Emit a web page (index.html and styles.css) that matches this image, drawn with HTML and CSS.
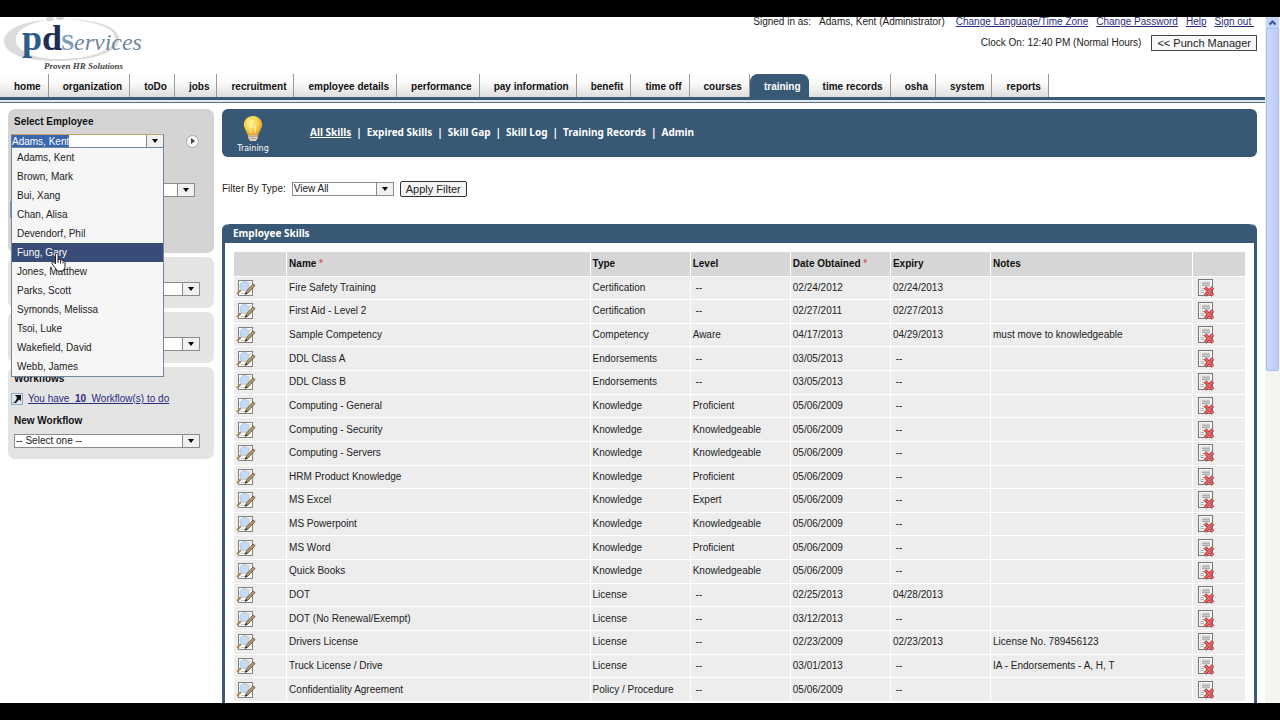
FILE: index.html
```html
<!DOCTYPE html>
<html lang="en">
<head>
    <meta charset="UTF-8">
    <meta name="viewport" content="width=device-width, initial-scale=1.0">
    <title>pdServices - Training</title>
    <link rel="stylesheet" href="styles.css">
</head>
<body>
    <svg class="defs" aria-hidden="true">
        <symbol id="edit" viewBox="0 0 20 18">
            <rect x="2.5" y="1.5" width="14" height="15" fill="#fbfbfa" stroke="#85837c"/>
            <path d="M5 14.500h6M12 4h3" stroke="#c9c9c5"/>
            <path d="M5 11l-4 4" stroke="#a5895f" stroke-width="2"/>
            <circle cx="8.500" cy="7" r="4.500" fill="#c5daf5" stroke="#b4c6de"/>
            <path d="M9 15.500l1.500-3.500L17 5l2 1.500-7 7.500z" fill="#b99b6b" stroke="#5c4830" stroke-width=".8"/>
            <path d="M9 15.500l1-2.500 1.500 1.300z" fill="#222"/>
        </symbol>
        <symbol id="delete" viewBox="0 0 20 18">
            <rect x="1.500" y=".5" width="14" height="16" fill="#f6f6f6" stroke="#777"/>
            <path d="M5 2.500h8v5H5z" fill="#ccc"/>
            <path d="M5 4.500h8M5 6.500h8M5 9.500h4M3 11.500h4M3 13.500h4" stroke="#b0b0b0"/>
            <path d="M3.500 2v13" stroke="#ddd"/>
            <path d="M8 8.500l8 8M16 8.500l-8 8" stroke="#a92d33" stroke-width="3.500"/>
            <path d="M8 8.500l8 8M16 8.500l-8 8" stroke="#e4686c" stroke-width="1.800"/>
        </symbol>
    </svg>

    <div class="window">
        <div class="page">
            <header class="header">
                <svg class="logo" width="148" height="57" viewBox="0 0 148 57" role="img" aria-label="pdServices">
                    <path fill="#dcdcdc" fill-rule="evenodd" d="M48 3C22 4 4 13 4 24c0 13 22 20 51 20 36 0 64-8 64-22 0-11-18-19-53-20 32 3 49 9 49 19 0 12-24 21-56 21-25 0-43-8-43-19 0-10 12-17 32-20z"/>
                    <ellipse cx="50" cy="2" rx="4" ry="2" fill="#d4d4d4"/>
                    <ellipse cx="60" cy="1" rx="4" ry="2" fill="#d4d4d4"/>
                    <text class="logo-p" x="22" y="33">p</text>
                    <text class="logo-d" x="42" y="33">d</text>
                    <text class="logo-s" x="61" y="33">S</text>
                    <text class="logo-rest" x="74" y="33">ervices</text>
                    <text class="logo-sub" x="44" y="52">Proven HR Solutions</text>
                </svg>
                <div class="account">
                    <div class="signed">
                        <span>Signed in as:</span>
                        <span class="who">Adams, Kent (Administrator)</span>
                        <a href="#">Change Language/Time Zone</a>
                        <a href="#">Change Password</a>
                        <a href="#">Help</a>
                        <a href="#">Sign out&nbsp;</a>
                    </div>
                    <div class="clock">
                        <span>Clock On: 12:40 PM (Normal Hours)</span>
                        <button class="punch" type="button">&lt;&lt; Punch Manager</button>
                    </div>
                </div>
            </header>

            <nav class="tabs">
                <a href="#">home</a>
                <a href="#">organization</a>
                <a href="#">toDo</a>
                <a href="#">jobs</a>
                <a href="#">recruitment</a>
                <a href="#">employee details</a>
                <a href="#">performance</a>
                <a href="#">pay information</a>
                <a href="#">benefit</a>
                <a href="#">time off</a>
                <a href="#">courses</a>
                <a href="#" class="active">training</a>
                <a href="#">time records</a>
                <a href="#">osha</a>
                <a href="#">system</a>
                <a href="#">reports</a>
            </nav>

            <div class="columns">
                <aside class="sidebar">
                    <section class="box box-employee">
                        <label class="box-title" for="employee">Select Employee</label>
                        <div class="employee-row">
                            <div class="combo">
                                <div class="combo-field">
                                    <span class="combo-value"><input id="employee" type="text" value="Adams, Kent"></span>
                                    <button class="combo-arrow" type="button" aria-label="Show employees"></button>
                                </div>
                                <ul class="combo-list">
                                    <li>Adams, Kent</li>
                                    <li>Brown, Mark</li>
                                    <li>Bui, Xang</li>
                                    <li>Chan, Alisa</li>
                                    <li>Devendorf, Phil</li>
                                    <li class="hover">Fung, Gary</li>
                                    <li>Jones, Matthew</li>
                                    <li>Parks, Scott</li>
                                    <li>Symonds, Melissa</li>
                                    <li>Tsoi, Luke</li>
                                    <li>Wakefield, David</li>
                                    <li>Webb, James</li>
                                </ul>
                                <svg class="cursor" width="15" height="19" viewBox="0 0 15 19">
                                    <path d="M4.500 11V2c0-2 2.500-2 2.500 0v5c1-1 2-1 2.500.5 1-.8 2-.5 2.500.7 1-.6 2 0 2 1.300v4c0 2-1.500 2.500-1.500 4.500H6c0-2-4-5-5-7.500-.5-1.500 1.500-2 2.500-.5z" fill="#fff" stroke="#222"/>
                                    <path d="M7 7v3M9.500 8v2.500M12 8.500v2" stroke="#222"/>
                                </svg>
                            </div>
                            <button class="go" type="button" aria-label="Go"></button>
                        </div>
                        <select class="drop drop-short" aria-label="Employee view"><option></option></select>
                        <button class="hidden-button" type="button" aria-label="Search"></button>
                    </section>
                    <section class="box box-small">
                        <select class="drop" aria-label="Department"><option></option></select>
                    </section>
                    <section class="box box-small">
                        <select class="drop" aria-label="Location"><option></option></select>
                    </section>
                    <section class="box box-workflow">
                        <h2 class="box-title">Workflows</h2>
                        <div class="todo">
                            <svg width="12" height="12" viewBox="0 0 12 12">
                                <rect x=".5" y=".5" width="11" height="11" fill="#dce8ef" stroke="#8fa9ba"/>
                                <path d="M4 2h6v6L8 6.500 5 10H2c3-2 3-3 4-5.500z" fill="#111"/>
                            </svg>
                            <a href="#">You have &nbsp;<b>10</b>&nbsp; Workflow(s) to do</a>
                        </div>
                        <label class="box-title" for="workflow">New Workflow</label>
                        <select class="drop" id="workflow"><option>-- Select one --</option></select>
                    </section>
                </aside>

                <main class="main">
                    <div class="banner">
                        <div class="module">
                            <svg width="20" height="26" viewBox="0 0 20 26">
                                <defs>
                                    <radialGradient id="glow" cx=".4" cy=".35" r=".7">
                                        <stop offset="0" stop-color="#fff6a0"/>
                                        <stop offset=".5" stop-color="#fbd34b"/>
                                        <stop offset="1" stop-color="#e39a22"/>
                                    </radialGradient>
                                </defs>
                                <path d="M10 0c5.500 0 9.500 4 9.500 9 0 4-3 6-4 11h-11C3.500 15 .5 13 .5 9c0-5 4-9 9.500-9z" fill="url(#glow)"/>
                                <path d="M8 18l-1-8 3 2 3-2-1 8" fill="none" stroke="#fff1a8"/>
                                <path d="M5 20h10v3l-2 3H7l-2-3z" fill="#e6d8c0"/>
                                <path d="M5 21.500h10M7 23.500h6" stroke="#b59c82"/>
                            </svg>
                            <span>Training</span>
                        </div>
                        <nav class="subnav">
                            <a href="#" class="current">All Skills</a><i>|</i>
                            <a href="#">Expired Skills</a><i>|</i>
                            <a href="#">Skill Gap</a><i>|</i>
                            <a href="#">Skill Log</a><i>|</i>
                            <a href="#">Training Records</a><i>|</i>
                            <a href="#">Admin</a>
                        </nav>
                    </div>

                    <form class="filter">
                        <label for="type">Filter By Type:</label>
                        <select class="drop" id="type"><option>View All</option></select>
                        <button class="apply" type="button">Apply Filter</button>
                    </form>

                    <section class="panel">
                        <h2>Employee Skills</h2>
                        <table class="skills">
                            <colgroup>
                                <col class="c-edit"><col class="c-name"><col class="c-mid"><col class="c-mid">
                                <col class="c-mid"><col class="c-mid"><col class="c-notes"><col class="c-edit">
                            </colgroup>
                            <thead>
                                <tr><th></th><th>Name <em>*</em></th><th>Type</th><th>Level</th><th>Date Obtained <em>*</em></th><th>Expiry</th><th>Notes</th><th></th></tr>
                            </thead>
                            <tbody>
                                <tr><td><button type="button" aria-label="Edit"><svg><use href="#edit"/></svg></button></td><td>Fire Safety Training</td><td>Certification</td><td>&nbsp;--</td><td>02/24/2012</td><td>02/24/2013</td><td></td><td><button type="button" aria-label="Delete"><svg><use href="#delete"/></svg></button></td></tr>
                                <tr><td><button type="button" aria-label="Edit"><svg><use href="#edit"/></svg></button></td><td>First Aid - Level 2</td><td>Certification</td><td>&nbsp;--</td><td>02/27/2011</td><td>02/27/2013</td><td></td><td><button type="button" aria-label="Delete"><svg><use href="#delete"/></svg></button></td></tr>
                                <tr><td><button type="button" aria-label="Edit"><svg><use href="#edit"/></svg></button></td><td>Sample Competency</td><td>Competency</td><td>Aware</td><td>04/17/2013</td><td>04/29/2013</td><td>must move to knowledgeable</td><td><button type="button" aria-label="Delete"><svg><use href="#delete"/></svg></button></td></tr>
                                <tr><td><button type="button" aria-label="Edit"><svg><use href="#edit"/></svg></button></td><td>DDL Class A</td><td>Endorsements</td><td>&nbsp;--</td><td>03/05/2013</td><td>&nbsp;--</td><td></td><td><button type="button" aria-label="Delete"><svg><use href="#delete"/></svg></button></td></tr>
                                <tr><td><button type="button" aria-label="Edit"><svg><use href="#edit"/></svg></button></td><td>DDL Class B</td><td>Endorsements</td><td>&nbsp;--</td><td>03/05/2013</td><td>&nbsp;--</td><td></td><td><button type="button" aria-label="Delete"><svg><use href="#delete"/></svg></button></td></tr>
                                <tr><td><button type="button" aria-label="Edit"><svg><use href="#edit"/></svg></button></td><td>Computing - General</td><td>Knowledge</td><td>Proficient</td><td>05/06/2009</td><td>&nbsp;--</td><td></td><td><button type="button" aria-label="Delete"><svg><use href="#delete"/></svg></button></td></tr>
                                <tr><td><button type="button" aria-label="Edit"><svg><use href="#edit"/></svg></button></td><td>Computing - Security</td><td>Knowledge</td><td>Knowledgeable</td><td>05/06/2009</td><td>&nbsp;--</td><td></td><td><button type="button" aria-label="Delete"><svg><use href="#delete"/></svg></button></td></tr>
                                <tr><td><button type="button" aria-label="Edit"><svg><use href="#edit"/></svg></button></td><td>Computing - Servers</td><td>Knowledge</td><td>Knowledgeable</td><td>05/06/2009</td><td>&nbsp;--</td><td></td><td><button type="button" aria-label="Delete"><svg><use href="#delete"/></svg></button></td></tr>
                                <tr><td><button type="button" aria-label="Edit"><svg><use href="#edit"/></svg></button></td><td>HRM Product Knowledge</td><td>Knowledge</td><td>Proficient</td><td>05/06/2009</td><td>&nbsp;--</td><td></td><td><button type="button" aria-label="Delete"><svg><use href="#delete"/></svg></button></td></tr>
                                <tr><td><button type="button" aria-label="Edit"><svg><use href="#edit"/></svg></button></td><td>MS Excel</td><td>Knowledge</td><td>Expert</td><td>05/06/2009</td><td>&nbsp;--</td><td></td><td><button type="button" aria-label="Delete"><svg><use href="#delete"/></svg></button></td></tr>
                                <tr><td><button type="button" aria-label="Edit"><svg><use href="#edit"/></svg></button></td><td>MS Powerpoint</td><td>Knowledge</td><td>Knowledgeable</td><td>05/06/2009</td><td>&nbsp;--</td><td></td><td><button type="button" aria-label="Delete"><svg><use href="#delete"/></svg></button></td></tr>
                                <tr><td><button type="button" aria-label="Edit"><svg><use href="#edit"/></svg></button></td><td>MS Word</td><td>Knowledge</td><td>Proficient</td><td>05/06/2009</td><td>&nbsp;--</td><td></td><td><button type="button" aria-label="Delete"><svg><use href="#delete"/></svg></button></td></tr>
                                <tr><td><button type="button" aria-label="Edit"><svg><use href="#edit"/></svg></button></td><td>Quick Books</td><td>Knowledge</td><td>Knowledgeable</td><td>05/06/2009</td><td>&nbsp;--</td><td></td><td><button type="button" aria-label="Delete"><svg><use href="#delete"/></svg></button></td></tr>
                                <tr><td><button type="button" aria-label="Edit"><svg><use href="#edit"/></svg></button></td><td>DOT</td><td>License</td><td>&nbsp;--</td><td>02/25/2013</td><td>04/28/2013</td><td></td><td><button type="button" aria-label="Delete"><svg><use href="#delete"/></svg></button></td></tr>
                                <tr><td><button type="button" aria-label="Edit"><svg><use href="#edit"/></svg></button></td><td>DOT (No Renewal/Exempt)</td><td>License</td><td>&nbsp;--</td><td>03/12/2013</td><td>&nbsp;--</td><td></td><td><button type="button" aria-label="Delete"><svg><use href="#delete"/></svg></button></td></tr>
                                <tr><td><button type="button" aria-label="Edit"><svg><use href="#edit"/></svg></button></td><td>Drivers License</td><td>License</td><td>&nbsp;--</td><td>02/23/2009</td><td>02/23/2013</td><td>License No. 789456123</td><td><button type="button" aria-label="Delete"><svg><use href="#delete"/></svg></button></td></tr>
                                <tr><td><button type="button" aria-label="Edit"><svg><use href="#edit"/></svg></button></td><td>Truck License / Drive</td><td>License</td><td>&nbsp;--</td><td>03/01/2013</td><td>&nbsp;--</td><td>IA - Endorsements - A, H, T</td><td><button type="button" aria-label="Delete"><svg><use href="#delete"/></svg></button></td></tr>
                                <tr><td><button type="button" aria-label="Edit"><svg><use href="#edit"/></svg></button></td><td>Confidentiality Agreement</td><td>Policy / Procedure</td><td>&nbsp;--</td><td>05/06/2009</td><td>&nbsp;--</td><td></td><td><button type="button" aria-label="Delete"><svg><use href="#delete"/></svg></button></td></tr>
                            </tbody>
                        </table>
                    </section>
                </main>
            </div>
        </div>

        <div class="scrollbar">
            <svg class="scroll-up" viewBox="0 0 13 11">
                <path d="M3.500 7.500l3-3 3 3" fill="none" stroke="#3d5580" stroke-width="2"/>
            </svg>
            <div class="thumb"></div>
        </div>
    </div>
</body>
</html>
```
FILE: styles.css
```css
* {
    box-sizing: border-box;
}
body {
    margin: 0;
    height: 100vh;
    padding: 17px 0;
    background: #000;
    color: #222;
    font-family: "Liberation Sans", Arial, sans-serif;
    font-size: 10px;
    line-height: 14px;
}
h2, ul {
    margin: 0;
    padding: 0;
}
button, input, select {
    font-family: inherit;
    color: inherit;
    margin: 0;
}
a {
    color: #2b2b7c;
}
.defs {
    position: absolute;
    width: 0;
    height: 0;
}
.window {
    display: flex;
    height: 100%;
    overflow: hidden;
    background: #fff;
}
.page {
    flex: 1;
    min-width: 0;
}

/* header */
.header {
    display: flex;
    justify-content: space-between;
    height: 57px;
}
.logo-p, .logo-d {
    font-family: "Liberation Serif", serif;
    font-weight: bold;
    font-size: 36px;
    fill: #2e5c8a;
}
.logo-d {
    fill: #1f2d55;
}
.logo-s, .logo-rest {
    font-family: "Liberation Serif", serif;
    font-weight: bold;
    font-size: 24px;
    fill: #7d9dbd;
}
.logo-rest {
    font-style: italic;
    font-weight: normal;
    fill: #71869d;
}
.logo-sub {
    font-family: "Liberation Serif", serif;
    font-style: italic;
    font-weight: bold;
    font-size: 9px;
    fill: #444;
}
.account {
    display: flex;
    flex-direction: column;
    align-items: flex-end;
    padding-right: 8px;
}
.signed {
    display: flex;
    gap: 8px;
    padding-right: 3px;
    line-height: 10px;
}
.signed .who {
    padding-right: 3px;
}
.clock {
    display: flex;
    align-items: center;
    gap: 10px;
    margin-top: 8px;
}
.punch {
    height: 16px;
    padding: 0 5px;
    border: 1px solid #444;
    background: #f8f8f8;
    font-size: 11px;
    line-height: 14px;
}

/* main tabs */
.tabs {
    display: flex;
    height: 26px;
    border-bottom: 3px solid #3a5a76;
    box-shadow: 0 2px #dce8f2, 0 3px #5f6f80;
}
.tabs a {
    padding: 6px 7px 0 14px;
    border-right: 1px solid #999;
    background: linear-gradient(#fff, #fbfbfb 35%, #dedede);
    color: #111;
    font-weight: bold;
    line-height: 13px;
    text-decoration: none;
}
.tabs .active {
    border-radius: 8px 8px 0 0;
    background: #375975;
    border-color: #375975;
    color: #fff;
}

.columns {
    display: flex;
    gap: 8px;
    padding: 9px 8px 0;
}

/* sidebar */
.sidebar {
    display: flex;
    flex-direction: column;
    gap: 4px;
    width: 206px;
    flex: none;
}
.box {
    padding: 6px;
    border-radius: 7px;
    background: #e4e4e4;
}
.box-title {
    display: block;
    color: #111;
    font-size: 10px;
    font-weight: bold;
    line-height: 14px;
}
.box-employee {
    height: 144px;
    padding-left: 3px;
    background: #d4d4d4;
}
.box-employee .box-title {
    padding-left: 3px;
}
.employee-row {
    display: flex;
    align-items: center;
    justify-content: space-between;
    margin-top: 5px;
    padding-right: 9px;
}
.combo {
    position: relative;
    width: 153px;
}
.combo-field {
    display: flex;
    height: 14px;
    border: 1px solid #6f7f8f;
    border-top-color: #c4a468;
    background: #fff;
}
.combo-value {
    flex: 1;
    display: flex;
    min-width: 0;
}
.combo-value input {
    field-sizing: content;
    height: 12px;
    padding: 0;
    border: none;
    background: #3a66b0;
    color: #fff;
    font-size: 10px;
}
.combo-arrow {
    width: 17px;
    padding: 0;
    border: none;
    border-left: 1px solid #888;
    background: url("data:image/svg+xml,%3Csvg xmlns='http://www.w3.org/2000/svg' width='6' height='4'%3E%3Cpath d='M0 0h6L3 4z'/%3E%3C/svg%3E") center no-repeat #f0f0f0;
}
.combo-list {
    position: absolute;
    z-index: 2;
    top: 13px;
    left: 0;
    width: 100%;
    border: 1px solid #72879d;
    background: #f6f6f6;
    list-style: none;
}
.combo-list li {
    height: 19px;
    padding-left: 5px;
    line-height: 19px;
}
.combo-list .hover {
    background: #394c78;
    color: #fff;
}
.cursor {
    position: absolute;
    z-index: 3;
    top: 119px;
    left: 40px;
}
.go {
    width: 13px;
    height: 13px;
    padding: 0;
    border: 1px solid #aaa;
    border-radius: 50%;
    background: url("data:image/svg+xml,%3Csvg xmlns='http://www.w3.org/2000/svg' width='4' height='6'%3E%3Cpath d='M0 0v6l4-3z' fill='%23444'/%3E%3C/svg%3E") center no-repeat #f6f6f6;
}
.drop {
    appearance: none;
    display: block;
    width: 186px;
    height: 14px;
    padding: 0 18px 0 1px;
    border: 1px solid #8c8c8c;
    border-radius: 0;
    background:
        url("data:image/svg+xml,%3Csvg xmlns='http://www.w3.org/2000/svg' width='17' height='12'%3E%3Cpath fill='%23f0f0f0' d='M0 0h17v12H0z'/%3E%3Cpath d='M.5 0v12' stroke='%23888'/%3E%3Cpath d='M6 4h6L9 8z'/%3E%3C/svg%3E") right center no-repeat #fff;
    font-size: 10px;
    line-height: 12px;
}
.drop-short {
    width: 181px;
    margin: 35px 0 0 3px;
}
.hidden-button {
    display: block;
    width: 60px;
    height: 17px;
    margin-top: 4px;
    margin-left: -1px;
    border: 1px solid #7c9ab5;
    background: #eee;
}
.box-small {
    height: 51px;
    padding-top: 25px;
}
.box-workflow {
    height: 92px;
    padding-top: 5px;
}
.todo {
    display: flex;
    align-items: center;
    gap: 5px;
    margin: 6px 0 8px -3px;
}
.box-workflow .drop {
    margin-top: 6px;
}

/* content */
.main {
    flex: 1;
    min-width: 0;
}
.banner {
    display: flex;
    height: 48px;
    border-radius: 6px;
    background: #375975;
    color: #fff;
}
.module {
    display: flex;
    flex-direction: column;
    align-items: center;
    width: 62px;
    margin-right: 26px;
    padding-top: 7px;
    font-family: "DejaVu Sans", sans-serif;
    font-size: 8px;
    line-height: 16px;
}
.subnav {
    display: flex;
    gap: 5px;
    padding-top: 16px;
    font-family: "Noto Sans", sans-serif;
    font-weight: bold;
}
.subnav a {
    color: #fff;
    text-decoration: none;
}
.subnav .current {
    text-decoration: underline;
}
.subnav i {
    font-style: normal;
}
.filter {
    display: flex;
    align-items: center;
    height: 67px;
    padding-bottom: 3px;
    gap: 6px;
}
.filter .drop {
    width: 102px;
}
.apply {
    height: 16px;
    padding: 0 5px;
    border: 1px solid #333;
    border-radius: 2px;
    background: #f4f4f4;
    font-size: 11px;
    line-height: 14px;
}
.panel {
    border: 3px solid #375975;
    border-top: none;
    border-radius: 6px 6px 0 0;
    padding: 0 8px 20px 9px;
}
.panel h2 {
    height: 19px;
    margin: 0 -9px 9px -10px;
    padding-left: 9px;
    border-radius: 6px 6px 0 0;
    background: #375975;
    color: #fff;
    font-family: "Noto Sans", sans-serif;
    font-size: 10px;
    line-height: 18px;
}
.skills {
    width: 100%;
    height: 450px;
    table-layout: fixed;
    border-collapse: collapse;
}
.c-edit {
    width: 5.2%;
}
.c-name {
    width: 30%;
}
.c-mid {
    width: 9.9%;
}
.skills th, .skills td {
    padding: 0 0 0 2px;
    border-right: 1px solid #fff;
    border-bottom: 1px solid #fff;
    background: #ededed;
    text-align: left;
    white-space: nowrap;
    line-height: 14px;
}
.skills td:last-child {
    padding-left: 4px;
}
.skills th {
    height: 24px;
    background: #d6d6d6;
    color: #111;
}
.skills em {
    color: #d33;
    font-style: normal;
    font-weight: normal;
}
.skills button {
    display: block;
    padding: 0;
    border: none;
    background: none;
}
.skills svg {
    display: block;
    width: 20px;
    height: 18px;
}

/* window scrollbar */
.scrollbar {
    width: 15px;
    padding: 0 1px;
    background: #f4f4f0;
}
.scroll-up {
    display: block;
    width: 100%;
    height: 11px;
    background: #c3d3fa;
}
.thumb {
    height: 50%;
    border: 1px solid #a9bff0;
    border-radius: 0 0 2px 2px;
    background: linear-gradient(to right, #c9d8fd, #bccdf8);
}
```
